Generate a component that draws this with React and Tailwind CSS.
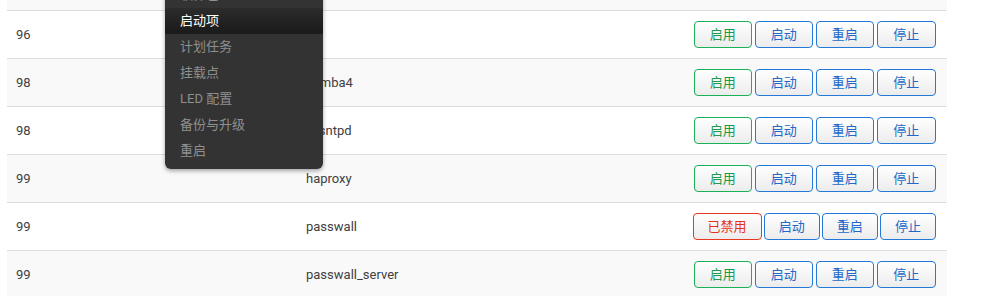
import React from 'react';

const rows = [
  { idx: '96', name: '', enabled: true, bg: 'bg-white' },
  { idx: '98', name: 'samba4', enabled: true, bg: 'bg-[#f9f9f9]' },
  { idx: '98', name: 'sysntpd', enabled: true, bg: 'bg-white' },
  { idx: '99', name: 'haproxy', enabled: true, bg: 'bg-[#f9f9f9]' },
  { idx: '99', name: 'passwall', enabled: false, bg: 'bg-white' },
  { idx: '99', name: 'passwall_server', enabled: true, bg: 'bg-[#f9f9f9]' },
];

const menu = ['软件包', '启动项', '计划任务', '挂载点', 'LED 配置', '备份与升级', '重启'];

const btnBase =
  'h-[27px] rounded-[4px] border bg-gradient-to-b from-white to-[#ececec] text-[13px] flex items-center justify-center leading-none';

const Btn = ({ children, tone = 'blue', w }) => {
  const tones = {
    blue: 'border-[#2479d6] text-[#2168c8]',
    green: 'border-[#1bb157] text-[#199a4c]',
    red: 'border-[#e8381f] text-[#e4321a]',
  };
  return <div className={`${btnBase} ${tones[tone]} ${w}`}>{children}</div>;
};

export default function App() {
  return (
    <div
      className="relative h-[296px] w-[997px] overflow-hidden bg-white text-[13px] text-[#404040]"
      style={{ fontFamily: 'Roboto, "Noto Sans CJK SC", sans-serif' }}
    >
      <div className="ml-[7px] w-[940px]">
        <div className="h-[10px] bg-[#f9f9f9]" />
        {rows.map((r, i) => (
          <div key={i} className={`flex h-[48px] items-center border-t border-[#dddddd] ${r.bg}`}>
            <div className="w-[299px] pl-[9px]">{r.idx}</div>
            <div className="flex-1">{r.name}</div>
            <div className="flex gap-[2.5px] pr-[11px]">
              {r.enabled ? (
                <>
                  <Btn tone="green" w="w-[58.5px]">启用</Btn>
                  <Btn w="w-[58.5px]">启动</Btn>
                  <Btn w="w-[58.5px]">重启</Btn>
                  <Btn w="w-[59.5px]">停止</Btn>
                </>
              ) : (
                <>
                  <Btn tone="red" w="w-[69px]">已禁用</Btn>
                  <Btn w="w-[55.5px]">启动</Btn>
                  <Btn w="w-[55.5px]">重启</Btn>
                  <Btn w="w-[56px]">停止</Btn>
                </>
              )}
            </div>
          </div>
        ))}
      </div>

      <div className="absolute left-[165px] top-[-18px] w-[158px] rounded-b-[6px] bg-[#333333] pb-[5px] shadow-[0_2px_4px_rgba(0,0,0,0.35)]">
        {menu.map((m) => (
          <div
            key={m}
            className={
              m === '启动项'
                ? 'flex h-[26px] items-center bg-gradient-to-b from-[#2c2c2c] to-[#1a1a1a] px-[15px] text-white'
                : 'flex h-[26px] items-center px-[15px] text-[#8f8f8f]'
            }
          >
            {m}
          </div>
        ))}
      </div>
    </div>
  );
}
